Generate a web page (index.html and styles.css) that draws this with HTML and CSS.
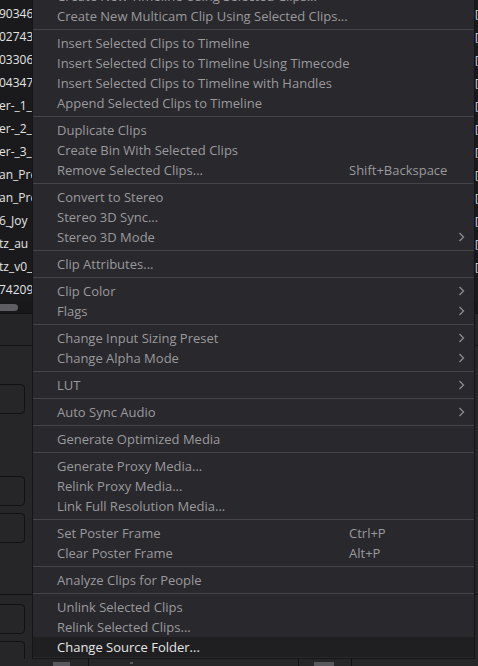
FILE: index.html
```html
<!DOCTYPE html>
<html>
<head>
<meta charset="utf-8">
<link rel="stylesheet" href="styles.css">
</head>
<body>
<div class="page">
  <div class="list">
    <div class="lrow"><span class="nm">90346_001</span><span class="tail">[</span></div>
    <div class="lrow"><span class="nm">02743_001</span><span class="tail">[</span></div>
    <div class="lrow"><span class="nm">03306_001</span><span class="tail">[</span></div>
    <div class="lrow"><span class="nm">04347_001</span><span class="tail">[</span></div>
    <div class="lrow"><span class="nm">er-_1_001</span><span class="tail">[</span></div>
    <div class="lrow"><span class="nm">er-_2_001</span><span class="tail">[</span></div>
    <div class="lrow"><span class="nm">er-_3_001</span><span class="tail">[</span></div>
    <div class="lrow"><span class="nm">an_Pre</span><span class="tail">[</span></div>
    <div class="lrow"><span class="nm">an_Pre</span><span class="tail">[</span></div>
    <div class="lrow"><span class="nm">6_Joy</span><span class="tail">[</span></div>
    <div class="lrow"><span class="nm">tz_au</span><span class="tail">[</span></div>
    <div class="lrow"><span class="nm">tz_v0_</span><span class="tail">[</span></div>
    <div class="lrow"><span class="nm">74209</span><span class="tail"></span></div>
  </div>
  <div class="scrollzone"><div class="thumb"></div></div>
  <div class="phead"></div>
  <div class="panel">
    <div class="btn b1"></div>
    <div class="btn b2"></div>
    <div class="btn b3"></div>
  </div>
  <div class="panel2">
    <div class="btn b4"></div>
    <div class="btn b5"></div>
  </div>
  <div class="bottombar">
    <div class="tab t1"></div>
    <div class="vline v1"></div>
    <div class="dot"></div>
    <div class="vline v2"></div>
    <div class="tab t2"></div>
    <div class="vline v3"></div>
  </div>
</div>

<div class="menu">
  <div class="item"><span class="lbl">Create New Timeline Using Selected Clips...</span></div>
  <div class="item"><span class="lbl">Create New Multicam Clip Using Selected Clips...</span></div>
  <div class="sep"></div>
  <div class="item"><span class="lbl">Insert Selected Clips to Timeline</span></div>
  <div class="item"><span class="lbl">Insert Selected Clips to Timeline Using Timecode</span></div>
  <div class="item"><span class="lbl">Insert Selected Clips to Timeline with Handles</span></div>
  <div class="item"><span class="lbl">Append Selected Clips to Timeline</span></div>
  <div class="sep"></div>
  <div class="item"><span class="lbl">Duplicate Clips</span></div>
  <div class="item"><span class="lbl">Create Bin With Selected Clips</span></div>
  <div class="item"><span class="lbl">Remove Selected Clips...</span><span class="key">Shift+Backspace</span></div>
  <div class="sep"></div>
  <div class="item"><span class="lbl">Convert to Stereo</span></div>
  <div class="item"><span class="lbl">Stereo 3D Sync...</span></div>
  <div class="item"><span class="lbl">Stereo 3D Mode</span><span class="key"></span><svg class="chev" viewBox="0 0 7 10" width="7" height="10"><polyline points="1.5,1 5.5,5 1.5,9"/></svg></div>
  <div class="sep"></div>
  <div class="item"><span class="lbl">Clip Attributes...</span></div>
  <div class="sep"></div>
  <div class="item"><span class="lbl">Clip Color</span><span class="key"></span><svg class="chev" viewBox="0 0 7 10" width="7" height="10"><polyline points="1.5,1 5.5,5 1.5,9"/></svg></div>
  <div class="item"><span class="lbl">Flags</span><span class="key"></span><svg class="chev" viewBox="0 0 7 10" width="7" height="10"><polyline points="1.5,1 5.5,5 1.5,9"/></svg></div>
  <div class="sep"></div>
  <div class="item"><span class="lbl">Change Input Sizing Preset</span><span class="key"></span><svg class="chev" viewBox="0 0 7 10" width="7" height="10"><polyline points="1.5,1 5.5,5 1.5,9"/></svg></div>
  <div class="item"><span class="lbl">Change Alpha Mode</span><span class="key"></span><svg class="chev" viewBox="0 0 7 10" width="7" height="10"><polyline points="1.5,1 5.5,5 1.5,9"/></svg></div>
  <div class="sep"></div>
  <div class="item"><span class="lbl">LUT</span><span class="key"></span><svg class="chev" viewBox="0 0 7 10" width="7" height="10"><polyline points="1.5,1 5.5,5 1.5,9"/></svg></div>
  <div class="sep"></div>
  <div class="item"><span class="lbl">Auto Sync Audio</span><span class="key"></span><svg class="chev" viewBox="0 0 7 10" width="7" height="10"><polyline points="1.5,1 5.5,5 1.5,9"/></svg></div>
  <div class="sep"></div>
  <div class="item"><span class="lbl">Generate Optimized Media</span></div>
  <div class="sep"></div>
  <div class="item"><span class="lbl">Generate Proxy Media...</span></div>
  <div class="item"><span class="lbl">Relink Proxy Media...</span></div>
  <div class="item"><span class="lbl">Link Full Resolution Media...</span></div>
  <div class="sep"></div>
  <div class="item"><span class="lbl">Set Poster Frame</span><span class="key">Ctrl+P</span></div>
  <div class="item"><span class="lbl">Clear Poster Frame</span><span class="key">Alt+P</span></div>
  <div class="sep"></div>
  <div class="item"><span class="lbl">Analyze Clips for People</span></div>
  <div class="sep"></div>
  <div class="item"><span class="lbl">Unlink Selected Clips</span></div>
  <div class="item"><span class="lbl">Relink Selected Clips...</span></div>
  <div class="item active"><span class="lbl">Change Source Folder...</span></div>
</div>
</body>
</html>
```

FILE: styles.css
```css
html, body {
  margin: 0;
  padding: 0;
}
body {
  width: 478px;
  height: 666px;
  overflow: hidden;
  position: relative;
  background: #1b1b1d;
  font-family: "Open Sans", "Noto Sans", "DejaVu Sans", sans-serif;
}
.page {
  width: 478px;
  height: 666px;
  display: flex;
  flex-direction: column;
}
.list {
  height: 302px;
  padding-top: 2px;
  box-sizing: border-box;
  background: #1a1a1c;
  display: flex;
  flex-direction: column;
}
.lrow {
  height: 23px;
  display: grid;
  grid-template-columns: 475px 3px;
  align-items: center;
  color: #e4e4e4;
  font-size: 12px;
  white-space: nowrap;
  overflow: hidden;
}
.nm {
  margin-left: -1px;
}
.tail {
  color: #d8d8d8;
  overflow: hidden;
  font-size: 11px;
}
.scrollzone {
  height: 11px;
  background: #18181a;
  display: flex;
  align-items: center;
}
.thumb {
  width: 22px;
  height: 7px;
  margin-left: -4px;
  background: #5e5e62;
  border-radius: 4px;
}
.phead {
  height: 31px;
  background: #252528;
  border-top: 1px solid #121214;
  border-bottom: 1px solid #121214;
}
.panel {
  height: 249px;
  background: #262629;
  border-bottom: 1px solid #121214;
  display: flex;
  flex-direction: column;
  padding-top: 38px;
  box-sizing: border-box;
}
.btn {
  width: 34px;
  height: 30px;
  margin-left: -9px;
  box-sizing: border-box;
  border: 1px solid #111113;
  border-radius: 4px;
  background: #262629;
  flex: none;
}
.b2 { margin-top: 62px; }
.b3 { margin-top: 7px; }
.panel2 {
  height: 64px;
  background: #262629;
  display: flex;
  flex-direction: column;
  padding-top: 9px;
  box-sizing: border-box;
  gap: 7px;
  overflow: hidden;
}
.bottombar {
  flex: 1;
  background: #262629;
  display: flex;
  align-items: flex-end;
}
.tab {
  width: 17px;
  height: 4px;
  background: #58585c;
  flex: none;
}
.t1 { margin-left: 53px; }
.vline {
  width: 1px;
  height: 100%;
  background: #121214;
  flex: none;
}
.v1 { margin-left: 18px; }
.dot {
  width: 3px;
  height: 2px;
  background: #58585c;
  margin-left: 41px;
  margin-bottom: 2px;
  flex: none;
}
.v2 { margin-left: 165px; }
.t2 { margin-left: 15px; width: 20px; }
.v3 { margin-left: 17px; }

.menu {
  position: absolute;
  left: 32px;
  top: -18px;
  width: 443px;
  box-sizing: border-box;
  background: #29282d;
  border: 1px solid #151517;
  padding: 3px 0 1px;
  font-size: 13px;
  color: #9a9a9c;
}
.item {
  height: 20px;
  display: grid;
  grid-template-columns: 292px 1fr 7px;
  align-items: center;
  padding-left: 24px;
  padding-right: 9px;
  white-space: nowrap;
}
.key {
  color: #9a9a9c;
}
.chev {
  fill: none;
  stroke: #8c8c8e;
  stroke-width: 1.3;
}
.sep {
  height: 1px;
  margin: 3px 0;
  background: #444348;
}
.active {
  background: #1f1f21;
  color: #e6e6e6;
}
```
